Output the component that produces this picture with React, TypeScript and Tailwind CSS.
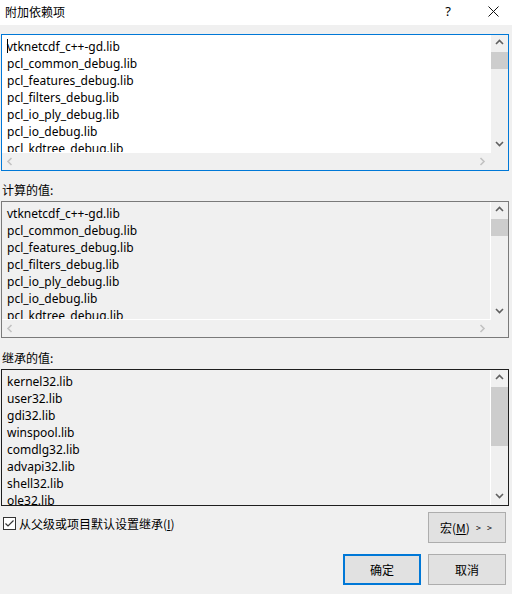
import React from 'react';

const mine = [
  'vtknetcdf_c++-gd.lib',
  'pcl_common_debug.lib',
  'pcl_features_debug.lib',
  'pcl_filters_debug.lib',
  'pcl_io_ply_debug.lib',
  'pcl_io_debug.lib',
  'pcl_kdtree_debug.lib',
  'pcl_keypoints_debug.lib',
];

const inherited = [
  'kernel32.lib',
  'user32.lib',
  'gdi32.lib',
  'winspool.lib',
  'comdlg32.lib',
  'advapi32.lib',
  'shell32.lib',
  'ole32.lib',
  'oleaut32.lib',
];

function Chevron({ dir, light }: { dir: 'up' | 'down' | 'left' | 'right'; light?: boolean }) {
  const color = light ? '#c2c2c2' : '#606060';
  const pts =
    dir === 'up'
      ? '1,5 4.5,1.5 8,5'
      : dir === 'down'
        ? '1,2 4.5,5.5 8,2'
        : dir === 'left'
          ? '5.5,1 2,4.5 5.5,8'
          : '2.5,1 6,4.5 2.5,8';
  return (
    <svg width="9" height="9" viewBox="0 0 9 9">
      <polyline points={pts} fill="none" stroke={color} strokeWidth="1.6" />
    </svg>
  );
}

type ListProps = {
  items: string[];
  border: string;
  bg: string;
  hscroll?: boolean;
  thumb: number;
  caret?: boolean;
};

function ScrollList({ items, border, bg, hscroll, thumb, caret }: ListProps) {
  return (
    <div className={`ml-[1px] flex h-[137px] w-[508px] flex-col border ${border} ${bg}`}>
      <div className="flex min-h-0 flex-1">
        <div
          className={`min-w-0 flex-1 overflow-hidden border-r border-white pl-[5px] pt-[3px] ${hscroll ? 'border-b' : ''}`}
        >
          {items.map((it, i) => (
            <div key={it} className="relative whitespace-nowrap leading-[17px]">
              {caret && i === 0 && (
                <span className="absolute left-0 top-[1px] h-[14px] w-[1px] bg-black" />
              )}
              {it}
            </div>
          ))}
        </div>
        <div className="flex w-[17px] flex-col bg-[#f0f0f0]">
          <div className="flex h-[17px] items-center justify-center">
            <Chevron dir="up" />
          </div>
          <div className="flex-1">
            <div className="w-full bg-[#cdcdcd]" style={{ height: thumb }} />
          </div>
          <div className="flex h-[17px] items-center justify-center">
            <Chevron dir="down" />
          </div>
        </div>
      </div>
      {hscroll && (
        <div className="flex h-[17px] bg-[#f0f0f0]">
          <div className="flex flex-1 items-center justify-between px-[4px]">
            <Chevron dir="left" light />
            <Chevron dir="right" light />
          </div>
          <div className="w-[17px]" />
        </div>
      )}
    </div>
  );
}

export default function App() {
  return (
    <div className="h-[594px] w-[512px] overflow-hidden bg-[#f0f0f0] font-['Noto_Sans','Noto_Sans_CJK_SC',sans-serif] text-[12px] text-black">
      {/* title bar */}
      <div className="flex h-[25px] items-center bg-white pb-[2px]">
        <span className="pl-[5px] font-['Noto_Sans_CJK_SC',sans-serif]">附加依赖项</span>
        <span className="ml-auto mr-[37px] text-[13px]">?</span>
        <svg width="11" height="11" viewBox="0 0 11 11" className="mr-[13px]">
          <path d="M0.5 0.5 L10.5 10.5 M10.5 0.5 L0.5 10.5" stroke="#111" strokeWidth="1" />
        </svg>
      </div>

      <div className="pt-[9px]">
        <ScrollList items={mine} border="border-[#0078d7]" bg="bg-white" hscroll thumb={17} caret />

        <div className="h-[30px] pl-[2px] pt-[10px] leading-[17px] font-['Noto_Sans_CJK_SC',sans-serif]">
          计算的值:
        </div>
        <ScrollList items={mine} border="border-[#7a7a7a]" bg="bg-[#f0f0f0]" hscroll thumb={17} />

        <div className="h-[31px] pl-[2px] pt-[11px] leading-[17px] font-['Noto_Sans_CJK_SC',sans-serif]">
          继承的值:
        </div>
        <ScrollList items={inherited} border="border-[#1e1e1e]" bg="bg-[#f0f0f0]" thumb={59} />
      </div>

      {/* bottom */}
      <div className="flex justify-between pr-[6px]">
        <label className="ml-[3px] mt-[11px] flex h-[13px] items-center gap-[3px] font-['Noto_Sans_CJK_SC',sans-serif]">
          <span className="flex h-[13px] w-[13px] items-center justify-center border border-[#333] bg-white">
            <svg width="11" height="11" viewBox="0 0 11 11">
              <polyline points="1.5,5.5 4,8 9.5,2.5" fill="none" stroke="#333" strokeWidth="1.2" />
            </svg>
          </span>
          <span>
            从父级或项目默认设置继承(<span className="underline">I</span>)
          </span>
        </label>
        <button className="mt-[6px] flex h-[31px] w-[78px] items-center justify-center border border-[#adadad] bg-[#e1e1e1] font-['Noto_Sans_CJK_SC',sans-serif]">
          宏(<span className="underline">M</span>)
          <span className="ml-[6px] text-[9px] tracking-[2px]">&gt; &gt;</span>
        </button>
      </div>
      <div className="mt-[11px] flex justify-end gap-[7px] pr-[6px] font-['Noto_Sans_CJK_SC',sans-serif]">
        <button className="h-[31px] w-[78px] border-2 border-[#0078d7] bg-[#e1e1e1]">确定</button>
        <button className="h-[31px] w-[78px] border border-[#adadad] bg-[#e1e1e1]">取消</button>
      </div>
    </div>
  );
}
